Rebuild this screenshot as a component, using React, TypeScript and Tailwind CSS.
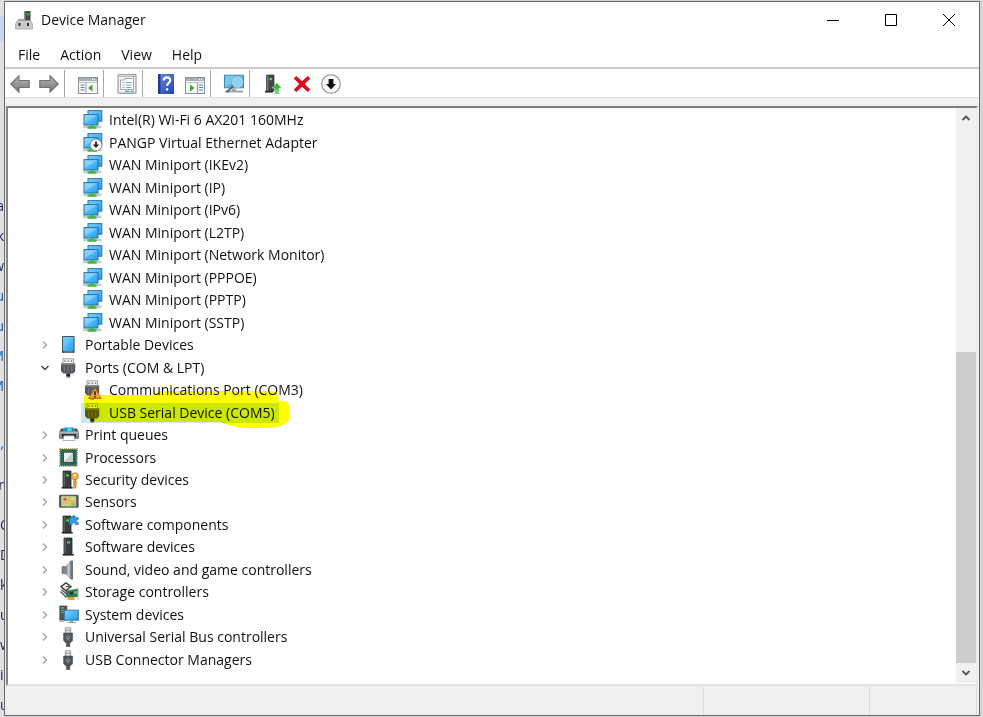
import React from "react";

type IconProps = { children: React.ReactNode; size?: string };

const Icon = ({ children, size = "size-5" }: IconProps) => (
  <svg viewBox="0 0 20 20" className={`${size} shrink-0`} aria-hidden="true">
    {children}
  </svg>
);

const Gradients = () => (
  <svg className="absolute size-0" aria-hidden="true">
    <defs>
      <linearGradient id="screen" x1="0" y1="0" x2="1" y2="1">
        <stop offset="0" stopColor="#7fd0fb" />
        <stop offset="1" stopColor="#1f9df0" />
      </linearGradient>
      <linearGradient id="metal" x1="0" y1="0" x2="0" y2="1">
        <stop offset="0" stopColor="#b8b8b8" />
        <stop offset="1" stopColor="#767676" />
      </linearGradient>
      <linearGradient id="cone" x1="0" y1="0" x2="1" y2="0">
        <stop offset="0" stopColor="#6f7780" />
        <stop offset="0.6" stopColor="#d4d9dd" />
        <stop offset="1" stopColor="#7d858c" />
      </linearGradient>
      <linearGradient id="help" x1="0" y1="0" x2="1" y2="1">
        <stop offset="0" stopColor="#6687dc" />
        <stop offset="1" stopColor="#2446ae" />
      </linearGradient>
    </defs>
  </svg>
);

const NetworkShapes = () => (
  <>
    <rect x="5" y="0.6" width="13.8" height="10.6" fill="url(#screen)" stroke="#2a77a8" />
    <rect x="0" y="15.6" width="18.5" height="2.6" fill="#c9cccf" />
    <rect x="1" y="4.6" width="14" height="10.4" fill="url(#screen)" stroke="#2a6f9c" />
    <path d="M1.600 5.200h12.800L1.600 13z" fill="#a5dffc" opacity="0.5" />
    <path d="M7 15.200h4v1h2.500v2.600h-9v-2.600H7z" fill="#43b649" />
  </>
);

const NetworkIcon = () => (
  <Icon>
    <NetworkShapes />
  </Icon>
);

const NetworkDisabledIcon = () => (
  <Icon>
    <NetworkShapes />
    <circle cx="13" cy="12" r="6" fill="#f4f4f4" stroke="#7a7a7a" strokeWidth="0.9" />
    <path d="M12.100 8.500h1.800v3h2.200L13 15.100l-3.100-3.600h2.200z" fill="#222" />
  </Icon>
);

const PortableIcon = () => (
  <Icon>
    <rect x="3" y="1" width="12.600" height="17" rx="0.800" fill="#4a5157" />
    <rect x="4" y="2" width="10.600" height="14" fill="url(#screen)" />
    <path d="M4 2h10.600L4 14z" fill="#6cc6fa" opacity="0.6" />
    <path d="M5.500 17h2m1 0h2m1 0h2" stroke="#a8b0b5" />
  </Icon>
);

const PlugShapes = () => (
  <>
    <rect x="4" y="0.8" width="10.500" height="5.400" fill="#f3f3f3" stroke="#9a9a9a" strokeWidth="0.9" />
    <path d="M6 2.500v1.300M9.200 2.500v1.300M12.500 2.500v1.300" stroke="#555" strokeWidth="1.3" />
    <path d="M2 5.600h14.200v7.600l-2 2.300h-3v4H7.400v-4h-3L2 13.200z" fill="#55575a" />
    <path d="M2 5.600h14.200v1.600H2z" fill="#77797c" />
    <path d="M5.400 8.500v5M9.100 8.500v5M12.800 8.500v5" stroke="#7e8083" />
    <path d="M7.500 17h3.600" stroke="#222" strokeWidth="2" />
  </>
);

const PortIcon = () => (
  <Icon>
    <PlugShapes />
  </Icon>
);

const PortWarningIcon = () => (
  <Icon>
    <PlugShapes />
    <path d="M12 8l6.300 10.500H5.700z" fill="#f4a62a" stroke="#b8701b" strokeLinejoin="round" />
    <path d="M12 11.200v3.800M12 16v1.400" stroke="#222" strokeWidth="1.600" />
  </Icon>
);

const PrinterIcon = () => (
  <Icon>
    <path d="M5.500 2.500h9l1 4.500h-11z" fill="#1789d1" />
    <path d="M8.500 2.500h3.500l1 3.500H8z" fill="#51e0d0" />
    <path d="M2 3.400h3L4.500 7H0.500zM15 3.400h3L19.500 7h-4z" fill="#4a5055" />
    <rect x="0" y="6.300" width="20" height="7.700" rx="1" fill="#84888c" />
    <path d="M0.500 6.700h19v1.800H.5z" fill="#b4b8bb" />
    <rect x="3" y="9" width="14" height="3.500" fill="#2f3337" />
    <path d="M5 10.800h10l1 4.700H4z" fill="#fff" stroke="#91969a" strokeWidth="0.700" />
  </Icon>
);

const ProcessorIcon = () => (
  <Icon>
    <rect x="0.700" y="0.700" width="17.600" height="17.600" fill="none" stroke="#b9954b" strokeWidth="1.400" strokeDasharray="1.100 1" />
    <rect x="1.200" y="1.200" width="16.600" height="16.600" fill="#2d6653" />
    <rect x="4.600" y="4.400" width="10" height="10.200" fill="#c9cbcc" stroke="#19483a" strokeWidth="0.800" />
    <path d="M5 4.800h8.800L5 13.600z" fill="#ececec" />
  </Icon>
);

const TowerShapes = () => (
  <>
    <path d="M4 1h8v16.400H4z" fill="#3a3e41" stroke="#272a2c" strokeWidth="0.800" />
    <path d="M4.600 1.500h1.200v15H4.600z" fill="#666b6e" />
    <rect x="7.200" y="4.300" width="2.600" height="2.200" fill="#39ee4c" />
    <path d="M2.700 17h11v1.600h-11z" fill="#25282a" />
  </>
);

const SecurityIcon = () => (
  <Icon>
    <TowerShapes />
    <circle cx="15.800" cy="6.300" r="3.500" fill="#edb653" stroke="#b4771e" strokeWidth="0.800" />
    <circle cx="15.800" cy="5" r="1.100" fill="#fff" />
    <path d="M14.700 9.500h2.300v2l1 1-1 1 1 1-1 1v2l-1.200 1-1.100-1z" fill="#dea13e" stroke="#b4771e" strokeWidth="0.600" />
  </Icon>
);

const SensorIcon = () => (
  <Icon>
    <rect x="0" y="3" width="19.400" height="12.600" rx="1.200" fill="#4d5254" stroke="#777c7e" strokeWidth="0.700" />
    <rect x="2.200" y="4.200" width="15" height="10.200" fill="#c7d98b" />
    <path d="M2.200 11.200H8l3-2h6.200M10.500 4.200v10.200M8 9h9.200" stroke="#f0b34b" strokeWidth="1.300" fill="none" />
    <circle cx="6" cy="7.300" r="1.700" fill="#e65252" />
    <path d="M12.200 10.800h4v2.800h-4z" fill="#91bd78" />
  </Icon>
);

const ComponentIcon = () => (
  <Icon>
    <TowerShapes />
    <path
      d="M10.500 2.500h2.800V1.800a1.500 1.300 0 0 1 3 0v.7h3v2.400h-.7a1.200 1.200 0 0 0 0 2.400h.7v2.400h-3V9a1.400 1.200 0 0 0-3 0v.7h-2.800z"
      fill="#2d9be4"
      stroke="#1c6fab"
      strokeWidth="0.500"
    />
  </Icon>
);

const SoftwareIcon = () => (
  <Icon>
    <svg x="1" y="0" width="20" height="20">
      <TowerShapes />
    </svg>
  </Icon>
);

const SpeakerIcon = () => (
  <Icon>
    <path d="M3 6.500h4v7.200H3z" fill="#7c858e" stroke="#606970" strokeWidth="0.600" />
    <path d="M7 6.500L11.500 1v18L7 13.700z" fill="url(#cone)" stroke="#8a9299" strokeWidth="0.500" />
    <path d="M11.500 0.500h2.500v19h-2.500z" fill="#6a747d" />
  </Icon>
);

const StorageIcon = () => (
  <Icon>
    <path d="M7 0.800l5 3.800L7 8.800 2 4.600z" fill="#ededed" stroke="#3b3f42" strokeWidth="1.400" />
    <path d="M7 4.600h3" stroke="#333" />
    <path d="M1.500 9.500l6 6M2.500 7.500l6 5.500" stroke="#5b6063" strokeWidth="1.500" />
    <path d="M7 9.200l11.500-2v7.500H8z" fill="#26844b" stroke="#12603a" strokeWidth="0.700" />
    <path d="M11 10.200l3-.6v3h-3z" fill="#1a3527" />
    <path d="M15.500 9.500h2v2h-2z" fill="#a6d3b2" />
    <path d="M8.500 15h7v3h-7z" fill="#e9a720" />
    <path d="M19 5.500v12" stroke="#aab0b3" />
  </Icon>
);

const SystemIcon = () => (
  <Icon>
    <path d="M0.800 1h7v14h-7z" fill="#50585d" stroke="#363c40" strokeWidth="0.700" />
    <path d="M1.800 5.500h5M1.800 7.500h5" stroke="#8e969a" />
    <rect x="2.200" y="2.100" width="2.500" height="1.500" fill="#39e34a" />
    <rect x="5.400" y="5.200" width="13.900" height="10" fill="url(#screen)" stroke="#2f7ba6" />
    <path d="M11 15.700h3v1.200h3v1.100H8.300v-1.100H11z" fill="#8aa2af" />
    <path d="M0 15.500h5v1.300H0z" fill="#9caab1" />
  </Icon>
);

const UsbIcon = () => (
  <Icon>
    <path d="M6.300.8h5.400v5.500H6.300z" fill="#f0f0f0" stroke="#8e8e8e" strokeWidth="0.900" />
    <path d="M7.900 2.500v1.800M10.200 2.500v1.800" stroke="#666" strokeWidth="1.100" />
    <path d="M4.600 6h9v6.800c0 2-2 2.500-2.800 3.400v3.600H7.400v-3.600c-.8-.9-2.800-1.400-2.800-3.400z" fill="#515457" stroke="#3c3f41" strokeWidth="0.500" />
    <path d="M9.100 7.500v6M7.300 9.500v1.800l1.800 1.200M10.900 9v1.500l-1.800 1.200" stroke="#999ea2" strokeWidth="0.800" fill="none" />
  </Icon>
);

const AppIcon = () => (
  <Icon>
    <path d="M10.500 1h6v11h-6z" fill="#45494c" />
    <path d="M10.500 1h1.200v11h-1.200z" fill="#777" />
    <rect x="12.500" y="3.300" width="2.600" height="2.200" fill="#30b840" />
    <path d="M4 8.800h6.500v2H4z" fill="#aaa" />
    <path d="M3.500 10.500h13L18.500 14v5H1.500v-5z" fill="#c9cacb" stroke="#9a9b9c" strokeWidth="0.700" />
    <path d="M4.500 13h2v3h-2zM13 13h2v3h-2z" fill="#303234" />
  </Icon>
);

const BackIcon = () => (
  <Icon>
    <path d="M0.800 10L9 1.800v4.700h10.200v7H9v4.700z" fill="url(#metal)" stroke="#707070" strokeWidth="1.100" />
  </Icon>
);

const ForwardIcon = () => (
  <Icon>
    <path d="M19.200 10L11 1.800v4.700H.8v7H11v4.700z" fill="url(#metal)" stroke="#707070" strokeWidth="1.100" />
  </Icon>
);

const WindowFrame = () => (
  <>
    <rect x="0.500" y="3.500" width="19" height="16" fill="#f7f8f9" stroke="#8c9298" />
    <path d="M1 4h18v3H1z" fill="#a7b0b8" />
    <path d="M14 5.500h1M16 5.500h1" stroke="#fff" />
    <path d="M1 8.500h18" stroke="#bfc4c9" />
  </>
);

const ConsoleTreeIcon = () => (
  <Icon>
    <WindowFrame />
    <path d="M8 8.500v11" stroke="#949aa0" />
    <path d="M2.500 11h4M2.500 13.500h4M2.500 16h4" stroke="#4a83c6" />
    <path d="M14.500 10.500v7L10 14z" fill="#39ab25" />
  </Icon>
);

const ActionPaneIcon = () => (
  <Icon>
    <WindowFrame />
    <path d="M12.500 8.500v11" stroke="#949aa0" />
    <path d="M14 11h4M14 13.500h4M14 16h4" stroke="#4a83c6" />
    <path d="M5 10.500v7L9.500 14z" fill="#39ab25" />
  </Icon>
);

const PropertiesIcon = () => (
  <Icon>
    <rect x="1" y="0.700" width="18" height="18.600" rx="1" fill="#eef0f1" stroke="#999fa4" strokeWidth="1.200" />
    <path d="M2 2.500h14" stroke="#b5babe" />
    <path d="M16 2.500h1.500" stroke="#666" />
    <path d="M3.500 6h4.500V4.500h8.500v11h-13z" fill="#fff" stroke="#a3a8ad" />
    <path d="M5.500 8.500h2M9 8.500h5.500M5.500 11h2M9 11h5.500M5.500 13.500h2M9 13.500h5.500" stroke="#8da6b8" />
    <path d="M8 17.500h4.500" stroke="#39b4df" strokeWidth="1.500" />
    <path d="M13.500 17.500h3.500" stroke="#9aa0a4" strokeWidth="1.500" />
  </Icon>
);

const HelpIcon = () => (
  <Icon>
    <path d="M2 0h16v20H2z" fill="url(#help)" />
    <path d="M2 0h2.500v20H2z" fill="#1d3c9d" />
    <path d="M7.800 6.500q0-3.200 3.200-3.200t3.200 3q0 1.700-1.700 2.900-1.400 1-1.400 2.800M11.100 14.300v2.200" stroke="#fff" strokeWidth="2.200" fill="none" />
  </Icon>
);

const ScanIcon = () => (
  <Icon>
    <rect x="0.500" y="1.200" width="19" height="12.600" fill="#58b7e4" stroke="#4286a9" />
    <path d="M1 1.700h18L1 13z" fill="#8bd4f0" opacity="0.600" />
    <path d="M8 14.500h4v2h7v2H1v-2h7z" fill="#99a6ae" />
    <path d="M9.500 11.500L2.800 18.200" stroke="#596b78" strokeWidth="2.200" />
    <circle cx="13.500" cy="8.300" r="5" fill="#8fd8f8" fillOpacity="0.850" stroke="#b9dcea" strokeWidth="1.200" />
    <circle cx="13.500" cy="8.300" r="5.700" fill="none" stroke="#7899a9" strokeWidth="0.500" />
  </Icon>
);

const UpdateIcon = () => (
  <Icon>
    <path d="M3.500 1H11v16H3.500z" fill="#44484b" stroke="#303335" strokeWidth="0.700" />
    <path d="M4 1.500h1.500V17H4z" fill="#72777a" />
    <rect x="6.500" y="4" width="2.500" height="2.200" fill="#3bea4c" />
    <path d="M2 16.800h8v1.800H2z" fill="#292c2e" />
    <path d="M13.800 8.800l5 5.200h-2.700v2.300h-4.500V14H8.900z" fill="#31bc37" stroke="#fff" strokeWidth="0.400" />
    <path d="M11.500 17.200h4.700M11.500 19.200h4.700" stroke="#31bc37" strokeWidth="1.200" />
  </Icon>
);

const UninstallIcon = () => (
  <Icon>
    <path d="M4.300 2L10 7.200 15.700 2 18.300 4.400 12.700 10l5.600 5.700-2.600 2.300-5.700-5.300L4.300 18l-2.600-2.300L7.300 10 1.700 4.400z" fill="#de0b1c" />
  </Icon>
);

const DisableIcon = () => (
  <Icon>
    <circle cx="10" cy="10" r="9.300" fill="#fafafa" stroke="#8d8d8d" strokeWidth="1.100" />
    <path d="M7.600 5h4.800v5H15l-5 5.500L5 10h2.600z" fill="#111" />
  </Icon>
);

type TreeItem = {
  label: string;
  icon: React.ComponentType;
  child?: boolean;
  open?: boolean;
  selected?: boolean;
};

const items: TreeItem[] = [
  { label: "Intel(R) Wi-Fi 6 AX201 160MHz", icon: NetworkIcon, child: true },
  { label: "PANGP Virtual Ethernet Adapter", icon: NetworkDisabledIcon, child: true },
  { label: "WAN Miniport (IKEv2)", icon: NetworkIcon, child: true },
  { label: "WAN Miniport (IP)", icon: NetworkIcon, child: true },
  { label: "WAN Miniport (IPv6)", icon: NetworkIcon, child: true },
  { label: "WAN Miniport (L2TP)", icon: NetworkIcon, child: true },
  { label: "WAN Miniport (Network Monitor)", icon: NetworkIcon, child: true },
  { label: "WAN Miniport (PPPOE)", icon: NetworkIcon, child: true },
  { label: "WAN Miniport (PPTP)", icon: NetworkIcon, child: true },
  { label: "WAN Miniport (SSTP)", icon: NetworkIcon, child: true },
  { label: "Portable Devices", icon: PortableIcon },
  { label: "Ports (COM & LPT)", icon: PortIcon, open: true },
  { label: "Communications Port (COM3)", icon: PortWarningIcon, child: true },
  { label: "USB Serial Device (COM5)", icon: PortIcon, child: true, selected: true },
  { label: "Print queues", icon: PrinterIcon },
  { label: "Processors", icon: ProcessorIcon },
  { label: "Security devices", icon: SecurityIcon },
  { label: "Sensors", icon: SensorIcon },
  { label: "Software components", icon: ComponentIcon },
  { label: "Software devices", icon: SoftwareIcon },
  { label: "Sound, video and game controllers", icon: SpeakerIcon },
  { label: "Storage controllers", icon: StorageIcon },
  { label: "System devices", icon: SystemIcon },
  { label: "Universal Serial Bus controllers", icon: UsbIcon },
  { label: "USB Connector Managers", icon: UsbIcon },
];

const Highlighter = () => (
  <svg
    viewBox="0 0 212 42"
    className="pointer-events-none absolute -top-3 left-[74px] z-10 h-[42px] w-[212px] mix-blend-multiply"
    aria-hidden="true"
  >
    <path
      d="M2 6H70L76 2H190Q197 3 197 12H203Q207 13 207 18V31L206 33Q200 36 196 38Q180 40 160 39Q145 36 137 33H12L4 28L2 18z"
      fill="#ffff00"
    />
  </svg>
);

const TreeRow = ({ label, icon: RowIcon, child, open, selected }: TreeItem) => {
  if (child) {
    return (
      <li role="treeitem" aria-selected={!!selected} className="relative flex flex-1 items-center pl-[73px]">
        <span className={`flex items-center gap-1.5 pl-0.5 pr-1 ${selected ? "bg-[#cce8ff]" : ""}`}>
          <RowIcon />
          <span className="whitespace-nowrap">{label}</span>
        </span>
        {selected && <Highlighter />}
      </li>
    );
  }
  return (
    <li role="treeitem" aria-expanded={!!open} className="flex flex-1 items-center gap-1.5 pl-[29px]">
      <button type="button" aria-label={`Toggle ${label}`} className="flex w-4 justify-center">
        <svg viewBox="0 0 10 10" className="size-2.5" fill="none" aria-hidden="true">
          {open ? (
            <path d="M1.500 3L5 6.500 8.500 3" stroke="#404040" strokeWidth="1.400" />
          ) : (
            <path d="M3 1.500L6.500 5 3 8.500" stroke="#a0a0a0" strokeWidth="1.300" />
          )}
        </svg>
      </button>
      <RowIcon />
      <span className="whitespace-nowrap">{label}</span>
    </li>
  );
};

type ToolButtonProps = { label: string; icon: React.ComponentType };

const ToolButton = ({ label, icon: ButtonIcon }: ToolButtonProps) => (
  <button type="button" aria-label={label} className="flex w-[29px] justify-center">
    <ButtonIcon />
  </button>
);

const Separator = () => <span className="mr-2 ml-px h-full w-px bg-[#a8a8a8]" />;

const Toolbar = () => (
  <div role="toolbar" className="flex h-7 items-center pt-px">
    <ToolButton label="Back" icon={BackIcon} />
    <ToolButton label="Forward" icon={ForwardIcon} />
    <Separator />
    <ToolButton label="Show console tree" icon={ConsoleTreeIcon} />
    <Separator />
    <ToolButton label="Properties" icon={PropertiesIcon} />
    <Separator />
    <ToolButton label="Help topics" icon={HelpIcon} />
    <ToolButton label="Show action pane" icon={ActionPaneIcon} />
    <Separator />
    <ToolButton label="Scan for hardware changes" icon={ScanIcon} />
    <Separator />
    <ToolButton label="Update driver" icon={UpdateIcon} />
    <ToolButton label="Uninstall device" icon={UninstallIcon} />
    <ToolButton label="Disable device" icon={DisableIcon} />
  </div>
);

const TitleBar = () => (
  <header className="flex h-9 items-center pr-px pl-[9px]">
    <AppIcon />
    <h1 className="flex-1 pl-[7px]">Device Manager</h1>
    <button type="button" aria-label="Minimize" className="flex h-full w-[58px] items-center justify-center">
      <svg viewBox="0 0 12 12" className="size-3" stroke="#000" fill="none">
        <path d="M0 6.500h12" />
      </svg>
    </button>
    <button type="button" aria-label="Maximize" className="flex h-full w-[58px] items-center justify-center">
      <svg viewBox="0 0 12 12" className="size-3" stroke="#000" fill="none">
        <path d="M.5.5h11v11H.5z" />
      </svg>
    </button>
    <button type="button" aria-label="Close" className="flex h-full w-[58px] items-center justify-center">
      <svg viewBox="0 0 12 12" className="size-3" stroke="#000" fill="none">
        <path d="M0 0l12 12M12 0L0 12" />
      </svg>
    </button>
  </header>
);

const ScrollBar = () => (
  <div className="mb-px flex w-5 shrink-0 flex-col bg-[#f0f0f0]">
    <button type="button" aria-label="Scroll up" className="flex h-5 items-center justify-center">
      <svg viewBox="0 0 10 10" className="size-2.5" fill="none">
        <path d="M1.500 7L5 3.500 8.500 7" stroke="#555" strokeWidth="1.800" />
      </svg>
    </button>
    <div className="flex-[224]" />
    <div className="flex-[310] bg-[#cdcdcd]" />
    <button type="button" aria-label="Scroll down" className="flex h-5 items-center justify-center">
      <svg viewBox="0 0 10 10" className="size-2.5" fill="none">
        <path d="M1.500 3L5 6.500 8.500 3" stroke="#555" strokeWidth="1.800" />
      </svg>
    </button>
  </div>
);

const PageLine = ({ children }: { children: React.ReactNode }) => (
  <span className="h-[30px] leading-[30px]">{children}</span>
);

// The sliver of the document that shows to the left of the window.
const PageBehind = () => (
  <div className="flex w-1 shrink-0 flex-col overflow-hidden bg-[#dfe1e4] text-[#24304f]">
    <div className="mt-4 h-[26px] shrink-0 bg-[#cbd6ea]" />
    <div className="flex flex-col items-end pt-[149px]">
      <PageLine>a</PageLine>
      <PageLine>k</PageLine>
      <PageLine>w</PageLine>
      <span className="flex flex-col items-end text-[#1b5fa8]">
        <PageLine>u</PageLine>
        <PageLine>u</PageLine>
        <PageLine>M</PageLine>
        <PageLine>M</PageLine>
      </span>
    </div>
    <div className="flex flex-col items-end pt-[27px] text-[#1b5fa8]">
      <PageLine>,</PageLine>
    </div>
    <div className="flex flex-col items-end pt-3">
      <PageLine>r</PageLine>
    </div>
    <div className="flex flex-col items-start pt-2.5">
      <PageLine>C</PageLine>
      <PageLine>D</PageLine>
      <PageLine>k</PageLine>
      <PageLine>u</PageLine>
      <PageLine>w</PageLine>
      <PageLine>i</PageLine>
      <PageLine>u</PageLine>
    </div>
  </div>
);

export default function App() {
  return (
    <div className="flex h-screen overflow-hidden bg-[#d6d6d6] pr-[3px] font-['Open_Sans','Noto_Sans',sans-serif] text-sm text-[#111]">
      <Gradients />
      <PageBehind />
      <main className="my-px flex min-w-0 flex-1 flex-col border border-[#686868] bg-white">
        <TitleBar />
        <nav className="flex h-[31px] items-center gap-5 border-b-2 border-[#cbcbcb] pt-1 pl-[13px]">
          <button type="button">File</button>
          <button type="button">Action</button>
          <button type="button">View</button>
          <button type="button">Help</button>
        </nav>
        <Toolbar />
        <div className="h-[9px] border-t border-[#dedede] bg-[#f0f0f0]" />
        <div className="flex flex-1 bg-[#f0f0f0] px-px">
          <section className="flex flex-1 border-2 border-t-[#7c7c7c] border-r-[#ececec] border-b-[#e3e3e3] border-l-[#858585] bg-white">
            <ul role="tree" className="flex min-w-0 flex-1 flex-col pt-px pb-[13px] leading-5">
              {items.map((item) => (
                <TreeRow key={item.label} {...item} />
              ))}
            </ul>
            <ScrollBar />
          </section>
        </div>
        <footer className="flex h-[29px] bg-[#f0f0f0] pt-px pr-0.5">
          <div className="flex-1 border-r border-[#dcdcdc]" />
          <div className="w-[166px] border-r border-[#dcdcdc]" />
          <div className="w-[107px] border-r border-[#dcdcdc]" />
        </footer>
      </main>
    </div>
  );
}
